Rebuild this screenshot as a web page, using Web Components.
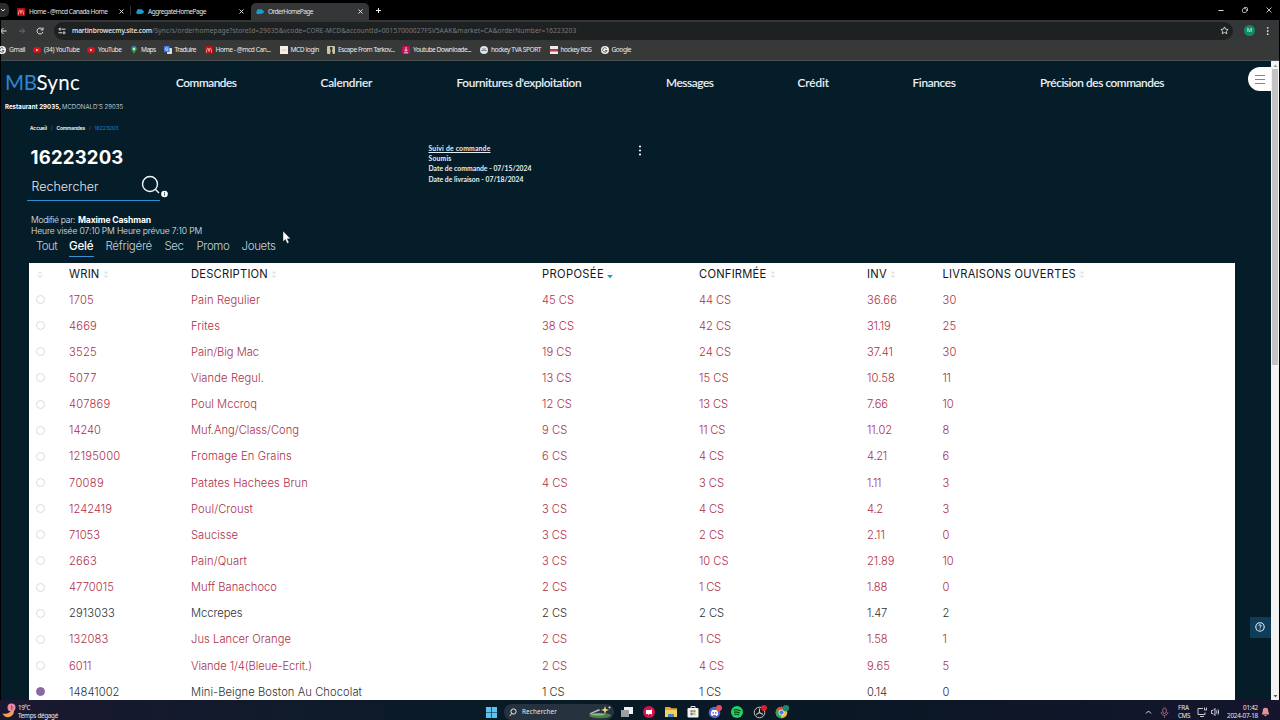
<!DOCTYPE html>
<html lang="fr">
<head>
<meta charset="utf-8">
<title>OrderHomePage</title>
<style>
  body {
    margin: 0;
    width: 1280px;
    height: 720px;
    overflow: hidden;
    background: #000;
    display: flex;
    flex-direction: column;
  }
</style>
</head>
<body>
<browser-chrome></browser-chrome>
<order-page></order-page>
<task-bar></task-bar>

<script>
// Texte sur une ligne, ajusté à la largeur donnée par l'attribut w
class FitText extends HTMLElement {
  constructor() {
    super();
    this.attachShadow({ mode: 'open' });
    this.shadowRoot.innerHTML = `
      <style>
        :host { display: inline-block; white-space: nowrap; }
        span { display: inline-block; text-decoration: inherit; }
      </style>
      <span><slot></slot></span>
    `;
  }

  connectedCallback() {
    const target = parseFloat(this.getAttribute('w'));
    const count = this.textContent.length;
    if (!target || !count) return;
    const span = this.shadowRoot.querySelector('span');
    const width = span.getBoundingClientRect().width;
    span.style.letterSpacing = `${(target - width) / count}px`;
    this.style.width = `${target}px`;
  }
}

class BrowserTab extends HTMLElement {
  constructor() {
    super();
    this.attachShadow({ mode: 'open' });
    this.shadowRoot.innerHTML = `
      <style>
        :host {
          display: flex;
          align-items: center;
          height: 17px;
          padding: 0 6px 0 7px;
          border-radius: 5px 5px 0 0;
          box-sizing: border-box;
          color: #e4e4e4;
        }
        :host([active]) { background: #353637; }
        .title { margin-left: 4px; flex: 1; }
        svg.x { width: 5px; height: 5px; }
      </style>
      <slot name="icon"></slot>
      <div class="title"><slot></slot></div>
      <svg class="x" viewBox="0 0 5 5" stroke="#eee" stroke-width=".9"><path d="M.5.5l4 4M4.500.5l-4 4"/></svg>
    `;
  }
}

class BookMark extends HTMLElement {
  constructor() {
    super();
    this.attachShadow({ mode: 'open' });
    this.shadowRoot.innerHTML = `
      <style>
        :host { display: flex; align-items: center; gap: 3px; color: #ececec; }
        slot[name=icon] { display: block; width: 8px; height: 8px; }
      </style>
      <slot name="icon"></slot>
      <slot></slot>
    `;
  }
}

const arches = `<svg slot="icon" width="8" height="8" viewBox="0 0 8 8"><rect width="8" height="8" rx="1" fill="#b80d16"/><path d="M1.500 6.500C1.700 1 3.500.5 4 5.500 4.500.5 6.300 1 6.500 6.500" fill="none" stroke="#ffb0a0" stroke-width=".9"/></svg>`;
const cloud = `<svg slot="icon" width="8" height="7" viewBox="0 0 8 7"><path d="M2 6C0 6-.2 3.300 1 2.900 1 .8 3.300.5 4 1.500 5.500.6 6.700 1.600 6.700 2.500 8.500 2.600 8.300 5.300 6.500 5.200 5.500 6.500 4 6 3.800 5.800 3 6.500 2.300 6.300 2 6z" fill="#1b9ad2"/></svg>`;
const tube = `<svg slot="icon" width="8" height="8" viewBox="0 0 8 8"><rect x=".3" y="1.200" width="7.400" height="5.600" rx="1.600" fill="#e0101c"/><path d="M3.200 2.800v2.400L5.300 4z" fill="#fff"/></svg>`;

class BrowserChrome extends HTMLElement {
  constructor() {
    super();
    this.attachShadow({ mode: 'open' });
    this.shadowRoot.innerHTML = `
      <style>
        :host {
          display: flex;
          flex-direction: column;
          height: 61px;
          font: 6.600px/10px "Noto Sans", "Open Sans", sans-serif;
          color: #e8e8e8;
          overflow: hidden;
        }
        .tabs { display: flex; height: 20px; align-items: flex-end; background: #000; }
        .search { width: 9px; height: 14px; margin-bottom: 3px; background: #2b2b2b; border-radius: 0 5px 5px 0; }
        .search svg { display: block; margin-top: 4px; }
        .sep { width: 1px; height: 9px; background: #333; margin-bottom: 5px; }
        .plus { margin: 0 0 6px 6px; }
        .wins { margin-left: auto; display: flex; gap: 18px; align-items: center; height: 20px; padding-right: 8px; }
        .bar { display: flex; align-items: center; height: 22px; background: #353637; margin: 0 1px; }
        .bar > svg { flex: none; }
        .url { display: flex; align-items: center; width: 1184px; height: 18px; border-radius: 9px; background: #1e2122; margin-left: 7px; padding: 0 4px 0 4px; box-sizing: border-box; color: #777b7d; }
        .url b { font-weight: 500; color: #f0f0f0; }
        .url .star { margin-left: auto; }
        .avatar { width: 11px; height: 11px; border-radius: 50%; background: #138a66; color: #c8fff0; font-size: 6px; line-height: 11px; text-align: center; margin-left: 11px; }
        .marks {
          display: grid;
          grid-template-columns: 35px 54px 43px 33.500px 41px 75px 47.500px 75px 78px 69.500px 51px 60px;
          margin: 0 1px;
          height: 18px;
          background: #373838;
          align-items: center;
          border-bottom: 1px solid #4a504f;
          padding-bottom: 1px;
          box-sizing: content-box;
        }
        .marks > * { margin-left: -3px; }
      </style>
      <div class="tabs">
        <div class="search"><svg width="9" height="6" viewBox="0 0 9 6"><path d="M1 2l2 2 2-2" fill="none" stroke="#ddd"/></svg></div>
        <browser-tab style="width:121px; padding-left:8px">${arches}<fit-text w="78.500">Home - @mcd Canada Home</fit-text></browser-tab>
        <div class="sep"></div>
        <browser-tab style="width:119px; margin-right:1px; padding-left:5px">${cloud}<fit-text w="58">AggregateHomePage</fit-text></browser-tab>
        <browser-tab style="width:118px; padding-left:5px" active>${cloud}<fit-text w="45">OrderHomePage</fit-text></browser-tab>
        <svg class="plus" width="7" height="7" viewBox="0 0 7 7" stroke="#eee" stroke-width="1"><path d="M3.500 1v5M1 3.500h5"/></svg>
        <div class="wins">
          <svg width="6" height="6" viewBox="0 0 6 6" stroke="#ddd"><path d="M.5 3.500h5"/></svg>
          <svg width="6" height="6" viewBox="0 0 6 6" stroke="#ddd" stroke-width=".8" fill="none"><rect x=".5" y="1.600" width="3.900" height="3.900" rx="1"/><path d="M2 .5h2.500q1 0 1 1V4"/></svg>
          <svg width="6" height="6" viewBox="0 0 6 6" stroke="#eee" stroke-width=".8"><path d="M.5.5l5 5M5.500.5l-5 5"/></svg>
        </div>
      </div>
      <div class="bar">
        <svg width="46" height="12" viewBox="0 0 46 12" fill="none" stroke="#e8e8e8" stroke-width="1">
          <path d="M5.500 6H-1M2.500 3L-.5 6l3 3"/>
          <path d="M18 6h5.500M21 3.500L23.500 6 21 8.500" stroke="#6d6f70"/>
          <path d="M41.500 4.200A3 3 0 1 0 42 6.800M42 2.500v2.400h-2.400"/>
        </svg>
        <div class="url">
          <svg width="8" height="8" viewBox="0 0 8 8" fill="none" stroke="#ddd" stroke-width="1"><circle cx="2" cy="2.200" r="1"/><path d="M4 2.200h3.500M.5 5.800H4"/><circle cx="6" cy="5.800" r="1"/></svg>
          <b style="margin-left:6px"><fit-text w="80">martinbrower.my.site.com</fit-text></b><fit-text w="424.500">/Sync/s/orderhomepage?storeId=29035&amp;vcode=CORE-MCD&amp;accountId=00157000027FSV5AAK&amp;market=CA&amp;orderNumber=16223203</fit-text>
          <svg class="star" width="9" height="9" viewBox="0 0 9 9" fill="none" stroke="#ddd" stroke-width=".9"><path d="M4.500.9l1.100 2.300 2.500.3-1.800 1.700.5 2.500-2.300-1.200-2.300 1.200.5-2.500L.9 3.500l2.500-.3z"/></svg>
        </div>
        <div class="avatar">M</div>
        <svg width="24" height="12" viewBox="0 0 24 12" fill="#ddd"><circle cx="12.700" cy="2.800" r=".9"/><circle cx="12.700" cy="6" r=".9"/><circle cx="12.700" cy="9.200" r=".9"/></svg>
      </div>
      <div class="marks">
        <book-mark><svg slot="icon" width="8" height="8" viewBox="0 0 8 8"><circle cx="4" cy="4" r="4" fill="#eee"/><path d="M5.500 2.500A2.200 2.200 0 1 0 6 4.500H4" fill="none" stroke="#555" stroke-width=".9"/></svg><fit-text w="16">Gmail</fit-text></book-mark>
        <book-mark>${tube}<fit-text w="35.500">(34) YouTube</fit-text></book-mark>
        <book-mark>${tube}<fit-text w="23.500">YouTube</fit-text></book-mark>
        <book-mark><svg slot="icon" width="8" height="8" viewBox="0 0 8 8"><path d="M4 8C3.500 5.500 1.300 5 1.300 3a2.700 2.700 0 0 1 5.400 0C6.700 5 4.500 5.500 4 8z" fill="#35a853"/><path d="M1.600 1.800L4 3 6 1.200A2.700 2.700 0 0 0 1.600 1.800z" fill="#4285f4"/><circle cx="4" cy="3" r="1" fill="#fff"/></svg><fit-text w="14.500">Maps</fit-text></book-mark>
        <book-mark><svg slot="icon" width="8" height="8" viewBox="0 0 8 8"><rect x="3" y="2" width="5" height="6" rx=".6" fill="#d8dce4"/><rect width="5.500" height="6" rx=".6" fill="#4a7fe8"/><path d="M3.800 2.300A1.300 1.300 0 1 0 4 3.300H2.800" fill="none" stroke="#fff" stroke-width=".6"/></svg><fit-text w="21.500">Traduire</fit-text></book-mark>
        <book-mark>${arches}<fit-text w="55">Home - @mcd Can...</fit-text></book-mark>
        <book-mark><svg slot="icon" width="8" height="8" viewBox="0 0 8 8"><rect width="8" height="8" fill="#f4f1e8"/><path d="M2 5.500C2.200 2.500 3.600 2.500 4 5 4.400 2.500 5.800 2.500 6 5.500" fill="none" stroke="#ecc98c" stroke-width=".8"/></svg><fit-text w="28.500">MCD login</fit-text></book-mark>
        <book-mark><svg slot="icon" width="8" height="8" viewBox="0 0 8 8"><rect width="8" height="8" rx="1" fill="#c9c6a9"/><path d="M3 1h2.500v2L5 4.500 6 8H3l.7-3.500L3 3z" fill="#3a3a30"/></svg><fit-text w="56.500">Escape From Tarkov...</fit-text></book-mark>
        <book-mark><svg slot="icon" width="8" height="8" viewBox="0 0 8 8"><rect width="8" height="8" rx="1.500" fill="#c3105c"/><path d="M4 1v4M2.500 3.800L4 5.300l1.500-1.500M2 6.800h4" fill="none" stroke="#fff" stroke-width=".8"/></svg><fit-text w="58">Youtube Downloade...</fit-text></book-mark>
        <book-mark><svg slot="icon" width="8" height="8" viewBox="0 0 8 8"><circle cx="4" cy="4" r="4" fill="#e2e4e8"/><path d="M1.200 4.500h5.600M2 3h4" stroke="#68707c" stroke-width=".8"/></svg><fit-text w="50">hockey TVA SPORT</fit-text></book-mark>
        <book-mark><svg slot="icon" width="8" height="8" viewBox="0 0 8 8"><rect width="8" height="8" fill="#f3e9e9"/><rect y="3" width="8" height="2.500" fill="#b04048"/></svg><fit-text w="31">hockey RDS</fit-text></book-mark>
        <book-mark><svg slot="icon" width="8" height="8" viewBox="0 0 8 8"><circle cx="4" cy="4" r="4" fill="#eee"/><path d="M5.500 2.500A2.200 2.200 0 1 0 6 4.500H4" fill="none" stroke="#555" stroke-width=".9"/></svg><fit-text w="19.500">Google</fit-text></book-mark>
      </div>
    `;
  }
}

class SiteNav extends HTMLElement {
  constructor() {
    super();
    this.attachShadow({ mode: 'open' });
    this.shadowRoot.innerHTML = `
      <style>
        :host { display: flex; height: 42px; color: #eef4f8; font: 500 11.800px/43px Lato, sans-serif; }
        .logo { width: 171px; padding-left: 4px; font-size: 20.500px; line-height: 42px; font-weight: 400; box-sizing: border-box; color: #fff; }
        .logo .mb { color: #2f86d0; }
        nav { display: grid; flex: 1; grid-template-columns: 144.500px 136px 209.500px 131.500px 115px 127.500px 1fr; padding-left: 4px; }
        nav fit-text { -webkit-text-stroke: .1px currentColor; }
        .menu { display: flex; align-items: center; width: 23px; height: 24px; margin-top: 6px; border-radius: 12px 0 0 12px; background: #fff; }
      </style>
      <div class="logo"><fit-text w="31.500" class="mb">MB</fit-text><fit-text w="43.500">Sync</fit-text></div>
      <nav>
        <fit-text w="60.500">Commandes</fit-text>
        <fit-text w="51.500">Calendrier</fit-text>
        <fit-text w="125">Fournitures d'exploitation</fit-text>
        <fit-text w="47.500">Messages</fit-text>
        <fit-text w="31.500">Crédit</fit-text>
        <fit-text w="43">Finances</fit-text>
        <fit-text w="124">Précision des commandes</fit-text>
      </nav>
      <div class="menu"><svg width="23" height="12" viewBox="0 0 23 12" stroke="#8b8088" stroke-width="1"><path d="M7 2.500h10M7 6.500h10M7 10.500h10"/></svg></div>
    `;
  }
}

class OrderHead extends HTMLElement {
  constructor() {
    super();
    this.attachShadow({ mode: 'open' });
    this.shadowRoot.innerHTML = `
      <style>
        :host { display: flex; height: 159.500px; color: #e2eaef; font: 300 8.600px/11px Inter, sans-serif; }
        fit-text { display: block; }
        .left { width: 427.500px; }
        .line { display: flex; }
        .store { font-size: 6px; line-height: 7px; padding-left: 4px; }
        b { font-weight: 700; color: #fff; }
        .crumbs { display: flex; font-size: 4.800px; line-height: 7px; margin-top: 15px; padding-left: 29px; color: #fff; font-weight: 600; }
        .crumbs i { font-style: normal; color: #7b8d98; width: 9.500px; text-align: center; font-weight: 300; }
        .crumbs a { color: #1f6fbb; }
        h1 { margin: 12px 0 0 29.500px; font: 700 18.500px/26px Inter, sans-serif; color: #fff; }
        .find { display: flex; align-items: center; width: 133px; height: 31px; margin: 0 0 0 26px; border-bottom: 1px solid #2493cf; box-sizing: border-box; padding-left: 4.500px; font-size: 12.500px; line-height: 18px; }
        .find > fit-text { margin-top: 4px; }
        .find svg { margin: 3px 0 0 42.500px; flex: none; }
        .who { padding-left: 30px; margin-top: 14px; }
        .who .line { gap: 3px; }
        .tabs { display: grid; grid-template-columns: 33px 36.500px 59px 32px 45px 40px; padding-left: 35px; margin-top: 1px; font-size: 11.500px; line-height: 16px; color: #c6d2d9; }
        .tabs fit-text { height: 18.500px; }
        .tabs .on { color: #fff; font-weight: 500; border-bottom: 1px solid #3a92d4; box-sizing: border-box; }
        .track { width: 204.500px; margin-top: 40px; font: 700 6.800px/10.200px Lato, sans-serif; color: #e6eef2; }
        .track .u { text-decoration: underline; }
        .dots { margin-top: 41.500px; }
      </style>
      <div class="left">
        <div class="line store"><b><fit-text w="56">Restaurant 29035,</fit-text></b><fit-text w="61" style="margin-left:1px">MCDONALD'S 29035</fit-text></div>
        <div class="crumbs"><fit-text w="17">Accueil</fit-text><i>/</i><fit-text w="28.500">Commandes</fit-text><i>/</i><a><fit-text w="24">16223203</fit-text></a></div>
        <h1><fit-text w="93">16223203</fit-text></h1>
        <div class="find"><fit-text w="67">Rechercher</fit-text>
          <svg width="30" height="28" viewBox="0 0 30 28" fill="none" stroke="#f0f6fa" stroke-width="1.400"><circle cx="9" cy="11" r="7.500"/><path d="M14.500 16.500l3.500 3.500"/><circle cx="23.500" cy="21" r="3.300" fill="#fff" stroke="none"/><path d="M23.500 20.500v2M23.500 19v.8" stroke="#14212b" stroke-width=".9"/></svg>
        </div>
        <div class="who">
          <div class="line"><fit-text w="44">Modifié par:</fit-text><b><fit-text w="73">Maxime Cashman</fit-text></b></div>
          <fit-text w="171">Heure visée 07:10 PM Heure prévue 7:10 PM</fit-text>
        </div>
        <div class="tabs">
          <fit-text w="21">Tout</fit-text>
          <fit-text w="24.500" class="on">Gelé</fit-text>
          <fit-text w="46.500">Réfrigéré</fit-text>
          <fit-text w="19">Sec</fit-text>
          <fit-text w="33">Promo</fit-text>
          <fit-text w="34">Jouets</fit-text>
        </div>
      </div>
      <div class="track">
        <fit-text w="62" class="u">Suivi de commande</fit-text>
        <fit-text w="23">Soumis</fit-text>
        <fit-text w="103">Date de commande - 07/15/2024</fit-text>
        <fit-text w="95">Date de livraison - 07/18/2024</fit-text>
      </div>
      <svg class="dots" width="14" height="12" viewBox="0 0 14 12" fill="#eef4f7"><circle cx="7" cy="1.500" r="1.100"/><circle cx="7" cy="5.500" r="1.100"/><circle cx="7" cy="9.500" r="1.100"/></svg>
    `;
  }
}

// [texte, largeur] pour chaque cellule; "dark" = ligne non modifiée
const rows = [
  [['1705', 25], ['Pain Regulier', 69], ['45 CS', 32], ['44 CS', 32], ['36.66', 30], ['30', 14]],
  [['4669', 28], ['Frites', 29], ['38 CS', 32], ['42 CS', 32], ['31.19', 23.5], ['25', 14]],
  [['3525', 28], ['Pain/Big Mac', 68], ['19 CS', 29.5], ['24 CS', 32], ['37.41', 26], ['30', 14]],
  [['5077', 28], ['Viande Regul.', 73], ['13 CS', 29.5], ['15 CS', 29.5], ['10.58', 28], ['11', 8]],
  [['407869', 41.5], ['Poul Mccroq', 66], ['12 CS', 30], ['13 CS', 29], ['7.66', 21], ['10', 11]],
  [['14240', 32], ['Muf.Ang/Class/Cong', 108], ['9 CS', 25.5], ['11 CS', 26], ['11.02', 25], ['8', 7]],
  [['12195000', 51.5], ['Fromage En Grains', 101], ['6 CS', 25.5], ['4 CS', 25], ['4.21', 20], ['6', 7]],
  [['70089', 35], ['Patates Hachees Brun', 117], ['4 CS', 25.5], ['3 CS', 25], ['1.11', 14], ['3', 7]],
  [['1242419', 43], ['Poul/Croust', 62], ['3 CS', 25], ['4 CS', 25], ['4.2', 16], ['3', 7]],
  [['71053', 31], ['Saucisse', 47], ['3 CS', 25], ['2 CS', 25], ['2.11', 18], ['0', 7]],
  [['2663', 28], ['Pain/Quart', 56], ['3 CS', 25], ['10 CS', 29.5], ['21.89', 27.5], ['10', 11]],
  [['4770015', 45], ['Muff Banachoco', 86], ['2 CS', 25], ['1 CS', 22], ['1.88', 20], ['0', 7]],
  [['2913033', 46], ['Mccrepes', 51.5], ['2 CS', 25], ['2 CS', 25], ['1.47', 20], ['2', 7], 'dark'],
  [['132083', 39.5], ['Jus Lancer Orange', 100], ['2 CS', 25], ['1 CS', 22], ['1.58', 20.5], ['1', 4]],
  [['6011', 22.5], ['Viande 1/4(Bleue-Ecrit.)', 121], ['2 CS', 25], ['4 CS', 25], ['9.65', 23], ['5', 7]],
  [['14841002', 50.5], ['Mini-Beigne Boston Au Chocolat', 171], ['1 CS', 22.5], ['1 CS', 22], ['0.14', 20], ['0', 7], 'dark'],
];
const heads = [['WRIN', 30.5], ['DESCRIPTION', 77], ['PROPOSÉE', 62], ['CONFIRMÉE', 67.5], ['INV', 20], ['LIVRAISONS OUVERTES', 133.5]];

class OrderTable extends HTMLElement {
  constructor() {
    super();
    this.attachShadow({ mode: 'open' });

    const sort = '<svg width="6" height="9" viewBox="0 0 6 9" fill="#e0e2e5"><path d="M.5 3.500L3 1l2.500 2.500zM.5 5.500L3 8l2.500-2.500z"/></svg>';
    const sorted = '<svg width="6" height="9" viewBox="0 0 6 9"><path d="M.5 3L3 .8 5.500 3z" fill="#e8f2f6"/><path d="M.2 5L3 8.500l2.800-3.500z" fill="#1f9ac8"/></svg>';

    this.shadowRoot.innerHTML = `
      <style>
        :host { display: block; width: 1205.500px; margin-left: 28px; height: 438px; overflow: hidden; background: #fff; font: 300 11.200px/26px Inter, sans-serif; }
        .row { display: grid; grid-template-columns: 40px 122px 351px 157px 168px 75.500px 1fr; height: 26.150px; align-items: center; color: #ad3049; }
        .row.dark { color: #2d3033; }
        .head { height: 24px; line-height: 23px; color: #15181b; font-weight: 400; }
        .head div { display: flex; align-items: center; gap: 3px; }
        .head div:first-child { margin-left: 8px; }
        .dot { width: 9px; height: 9px; border-radius: 50%; border: 1px solid #dcdcde; box-sizing: border-box; margin-left: 7px; }
        .dot.full { background: #8a69a3; border-color: #8a69a3; }
      </style>
      <div class="row head">
        <div>${sort}</div>
        ${heads.map(([text, w]) => `<div><fit-text w="${w}">${text}</fit-text>${text === 'PROPOSÉE' ? sorted : sort}</div>`).join('')}
      </div>
      ${rows.map((row, i) => `
        <div class="row ${row[6] || ''}">
          <div class="dot ${i === rows.length - 1 ? 'full' : ''}"></div>
          ${row.slice(0, 6).map(([text, w]) => `<fit-text w="${w}">${text}</fit-text>`).join('')}
        </div>`).join('')}
    `;
  }
}

class OrderPage extends HTMLElement {
  constructor() {
    super();
    this.attachShadow({ mode: 'open' });
    this.shadowRoot.innerHTML = `
      <style>
        :host { display: flex; position: relative; height: 639px; margin: 0 1px; background: #051d29; overflow: hidden; }
        main { width: 1270px; }
        .scroll { display: flex; flex-direction: column; align-items: center; width: 8px; background: #f2f2f2; }
        .thumb { width: 6px; height: 296px; margin-bottom: auto; background: #c3c3c3; }
        .scroll svg { display: block; margin: 3px 0 2px; }
        .help { position: absolute; left: 1249px; top: 556px; width: 21px; height: 21px; background: #0f3c58; }
        .cursor { position: absolute; left: 281px; top: 169px; }
      </style>
      <main>
        <site-nav></site-nav>
        <order-head></order-head>
        <order-table></order-table>
      </main>
      <div class="scroll">
        <svg width="5" height="3" viewBox="0 0 5 3"><path d="M.5 3L2.500.5 4.500 3z" fill="#999"/></svg>
        <div class="thumb"></div>
        <svg width="5" height="3" viewBox="0 0 5 3"><path d="M.5 0L2.500 2.500 4.500 0z" fill="#555"/></svg>
      </div>
      <svg class="help" viewBox="0 0 21 21" fill="none" stroke="#e6f2f8" stroke-width="1.100"><circle cx="10" cy="10" r="4.200"/><path d="M8.800 9q0-1.300 1.200-1.300T11.200 9q0 .7-1.200 1.300v.7M10 11.700v.9" stroke-width=".9"/></svg>
      <svg class="cursor" width="10" height="15" viewBox="0 0 10 15"><path d="M1 1v10.500l2.400-2 1.800 4 1.800-.9-1.700-3.800H8.500z" fill="#fff" stroke="#111" stroke-width=".4"/></svg>
    `;
  }
}

class TaskBar extends HTMLElement {
  constructor() {
    super();
    this.attachShadow({ mode: 'open' });
    this.shadowRoot.innerHTML = `
      <style>
        :host { display: flex; height: 20px; background: linear-gradient(90deg, #1a1830, #111a2b 20%, #071b27 40%, #0a1825 65%, #15152d); color: #e9e9ee; font: 6.300px/8px "Noto Sans", "Open Sans", sans-serif; }
        fit-text { display: block; }
        .weather { display: flex; width: 485px; gap: 2px; padding: 3.500px 0 0 2px; box-sizing: border-box; }
        .weather svg { margin-top: -1px; }
        .apps { display: flex; align-items: center; height: 20px; margin-top: 2px; }
        .search { display: flex; align-items: center; width: 110px; height: 16px; border-radius: 8px; background: #26323d; margin: 0 6px 0 6px; padding-left: 5px; box-sizing: border-box; }
        .icons { display: grid; grid-template-columns: repeat(8, 22.100px); align-items: center; }
        .tray { display: flex; margin-left: auto; padding-right: 10px; align-items: center; text-align: center; }
        .lines { margin-top: 4px; }
        .date fit-text { margin-left: auto; }
      </style>
      <div class="weather">
        <svg width="14" height="16" viewBox="0 0 14 16"><path d="M9 1c2 5 0 11-8.500 9.500C2 15 9 16 11.500 10.500 13 7 11.500 3 9 1z" fill="#f0a050"/><circle cx="9.500" cy="4.500" r="4" fill="#e58aa0"/><path d="M9.800 2.500v4" stroke="#8a2a42" stroke-width=".9"/></svg>
        <div><fit-text w="12">19°C</fit-text><fit-text w="40">Temps dégagé</fit-text></div>
      </div>
      <div class="apps">
        <svg width="13" height="13" viewBox="0 0 13 13" fill="#5cc2f2"><path d="M1 1h5.200v5.200H1zM6.800 1H12v5.200H6.800zM1 6.800h5.200V12H1zM6.800 6.800H12V12H6.800z"/></svg>
        <div class="search">
          <svg width="9" height="9" viewBox="0 0 9 9" fill="none" stroke="#eee" stroke-width="1"><circle cx="4.500" cy="3.500" r="2.600"/><path d="M2.700 5.500L.8 8"/></svg>
          <fit-text w="35" style="margin-left:4px">Rechercher</fit-text>
          <svg width="25" height="14" viewBox="0 0 25 14" style="margin-left:31px"><ellipse cx="12" cy="10.500" rx="11" ry="2.800" fill="#4b7d4c"/><ellipse cx="10" cy="9.500" rx="7" ry="1" fill="#93b98b"/><path d="M1 8.500L11 4l1 1.500L3 9z" fill="#b5bcc8"/><path d="M17 1l1 3 3 1-3 1-1 3-1-3-3-1 3-1z" fill="#eed878"/><circle cx="21.500" cy="2.500" r="1" fill="#f4e9a4"/></svg>
        </div>
        <div class="icons">
          <svg width="14" height="14" viewBox="0 0 14 14"><rect x="4" y="2" width="9" height="7" fill="#f0f0f0"/><rect x="1" y="5" width="8" height="7" fill="#9a9fa5"/></svg>
          <svg width="14" height="14" viewBox="0 0 14 14"><circle cx="7" cy="7" r="6" fill="#d41449"/><path d="M4 5h5l1-1v5.500L8.500 9H7l-1 1.500V9H4z" fill="#fff"/></svg>
          <svg width="14" height="14" viewBox="0 0 14 14"><path d="M1 2h5l1.200 1.300H13V12H1z" fill="#e3a52a"/><path d="M1 5h12v7H1z" fill="#f6cf61"/><path d="M4 9h6v3H4z" fill="#3c88c8"/></svg>
          <svg width="14" height="14" viewBox="0 0 14 14"><path d="M5 3V1.500h4V3" fill="none" stroke="#dce9f2"/><rect x="1.500" y="3" width="11" height="9.500" rx="1" fill="#f3f5f7"/><path d="M4.500 5.200h2.200v2.200H4.500z" fill="#e5573c"/><path d="M7.300 5.200h2.200v2.200H7.300z" fill="#6bab3c"/><path d="M4.500 8h2.200v2.200H4.500z" fill="#3486c8"/><path d="M7.300 8h2.200v2.200H7.300z" fill="#e9b73a"/></svg>
          <svg width="14" height="14" viewBox="0 0 14 14"><circle cx="6.500" cy="7.500" r="5.800" fill="#5865d8"/><path d="M3 10c-.3-2 .3-4 1.200-5h4.600c1 1 1.500 3 1.200 5l-1.700 1-.7-1H5.400l-.7 1z" fill="#fff"/><circle cx="5.200" cy="7.900" r=".8" fill="#5865d8"/><circle cx="7.800" cy="7.900" r=".8" fill="#5865d8"/><circle cx="11" cy="3" r="3" fill="#e44d5c"/></svg>
          <svg width="14" height="14" viewBox="0 0 14 14"><circle cx="7" cy="7" r="6" fill="#1ed45f"/><path d="M3.700 5q3.500-1 6.800.8M4 7.200q3-.8 5.700.7M4.300 9.300q2.500-.6 4.700.6" fill="none" stroke="#07210f" stroke-width="1"/></svg>
          <svg width="14" height="14" viewBox="0 0 14 14"><circle cx="6.500" cy="7.500" r="5.300" fill="#17191c" stroke="#c4c6c9" stroke-width="1"/><path d="M6.500 7.500V3.500M6.500 7.500L3 9.600M6.500 7.500l3.500 2" stroke="#c4c6c9" stroke-width="1.100"/><circle cx="11" cy="3" r="3" fill="#dc1f2c"/></svg>
          <svg width="14" height="14" viewBox="0 0 14 14"><circle cx="6.500" cy="7.500" r="5.800" fill="#e8bd35"/><path d="M6.500 7.500L1.500 4.600a5.800 5.800 0 0 1 10 0z" fill="#d94a3c"/><path d="M6.500 7.500L1.500 4.600A5.800 5.800 0 0 0 6 13.300z" fill="#35a354"/><circle cx="6.500" cy="7.500" r="2.600" fill="#4382e0" stroke="#fff" stroke-width=".8"/><circle cx="11" cy="3.200" r="3.200" fill="#168a6c"/></svg>
        </div>
      </div>
      <div class="tray">
        <svg width="33" height="14" viewBox="0 0 33 14" fill="none" stroke="#e4e4ea" stroke-width="1" style="margin-top:3px"><path d="M3 8.500L5.500 6 8 8.500"/><rect x="19.800" y="3" width="3.400" height="5.500" rx="1.700" stroke="#a86a80"/><path d="M18 7q.5 3.500 3.500 3.500T25 7M21.500 10.500V13" stroke="#a86a80" stroke-width=".8"/></svg>
        <div class="lines" style="margin-left:2px"><fit-text w="11">FRA</fit-text><fit-text w="12">CMS</fit-text></div>
        <svg width="36" height="12" viewBox="0 0 36 12" fill="none" stroke="#dcdce4" stroke-width=".9" style="margin:3px 1px 0 0"><path d="M13 2.500H8v6h7V6.500M10 10.500h4"/><path d="M14.500 1.500v2.500h2V1.500"/><path d="M21.500 4.500H23L25 2.500v7L23 7.500h-1.500zM26.500 4.500q.8 1.500 0 3M28 3.300q1.300 2.700 0 5.400"/></svg>
        <div class="lines date"><fit-text w="15">01:42</fit-text><fit-text w="31">2024-07-18</fit-text></div>
        <svg width="9" height="10" viewBox="0 0 9 10" fill="#e2929b" style="margin:3px 0 0 3px"><path d="M4.500.8C6.500.8 7.200 2 7.200 4L8.200 7.500H.8L1.800 4C1.800 2 2.500.8 4.500.8zM3.200 8h2.600q-.3 1.200-1.300 1.200T3.200 8z"/></svg>
      </div>
    `;
  }
}

customElements.define('fit-text', FitText);
customElements.define('browser-tab', BrowserTab);
customElements.define('book-mark', BookMark);
customElements.define('site-nav', SiteNav);
customElements.define('order-head', OrderHead);
customElements.define('order-table', OrderTable);
customElements.define('browser-chrome', BrowserChrome);
customElements.define('order-page', OrderPage);
customElements.define('task-bar', TaskBar);
</script>
</body>
</html>
